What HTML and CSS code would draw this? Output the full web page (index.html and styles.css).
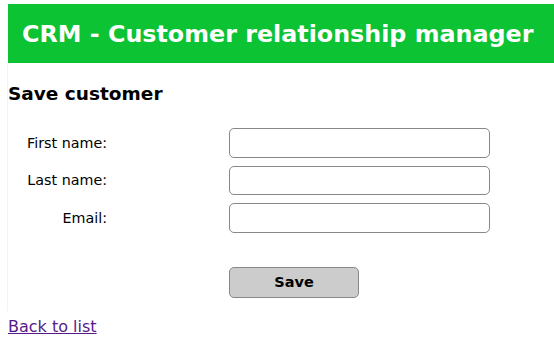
FILE: index.html
```html
<!DOCTYPE html>
<html>
<head>
<meta charset="utf-8">
<link rel="stylesheet" href="styles.css">
</head>
<body>
<header class="topbar">
  <h1 class="title">CRM - Customer relationship manager</h1>
</header>
<main class="content">
  <h2 class="heading">Save customer</h2>
  <form class="form">
    <label class="label" for="fn">First name:</label>
    <input class="field" id="fn" type="text">
    <label class="label" for="ln">Last name:</label>
    <input class="field" id="ln" type="text">
    <label class="label" for="em">Email:</label>
    <input class="field" id="em" type="text">
    <span class="spacer"></span>
    <button class="save" type="button">Save</button>
  </form>
</main>
<a class="back" href="#">Back to list</a>
</body>
</html>
```
FILE: styles.css
```css
html, body {
  margin: 0;
  padding: 0;
  background: #fff;
}
body {
  padding: 4px 0 0 8px;
  font-family: "DejaVu Sans", Verdana, sans-serif;
  color: #000;
}
.topbar {
  background: #0bc333;
  height: 59px;
  display: flex;
  align-items: center;
  padding-left: 14px;
}
.title {
  margin: 0;
  color: #fff;
  font-size: 23.8px;
  font-weight: bold;
  white-space: nowrap;
}
.content {
  border-left: 1px solid #f3f3f3;
  margin-left: -1px;
  padding-top: 20px;
  padding-bottom: 13px;
}
.heading {
  margin: 0 0 24px 0;
  font-size: 18.5px;
  font-weight: bold;
}
.form {
  display: grid;
  grid-template-columns: 99px 261px;
  column-gap: 122px;
  row-gap: 8px;
  align-items: center;
}
.label {
  text-align: right;
  font-size: 14.3px;
}
.field {
  box-sizing: border-box;
  width: 261px;
  height: 29.5px;
  margin: 0;
  border: 1px solid #888;
  border-radius: 5px;
  background: #fff;
  padding: 0 6px;
  font: inherit;
}
.spacer {
  grid-column: 1;
}
.save {
  grid-column: 2;
  margin-top: 26px;
  box-sizing: border-box;
  width: 130px;
  height: 31px;
  border: 1px solid #888;
  border-radius: 5px;
  background: #ccc;
  font-family: "DejaVu Sans", Verdana, sans-serif;
  font-weight: bold;
  font-size: 14.5px;
  color: #000;
  padding: 0;
}
.back {
  display: inline-block;
  margin-top: 6px;
  color: #551a8b;
  font-size: 16px;
}
```
